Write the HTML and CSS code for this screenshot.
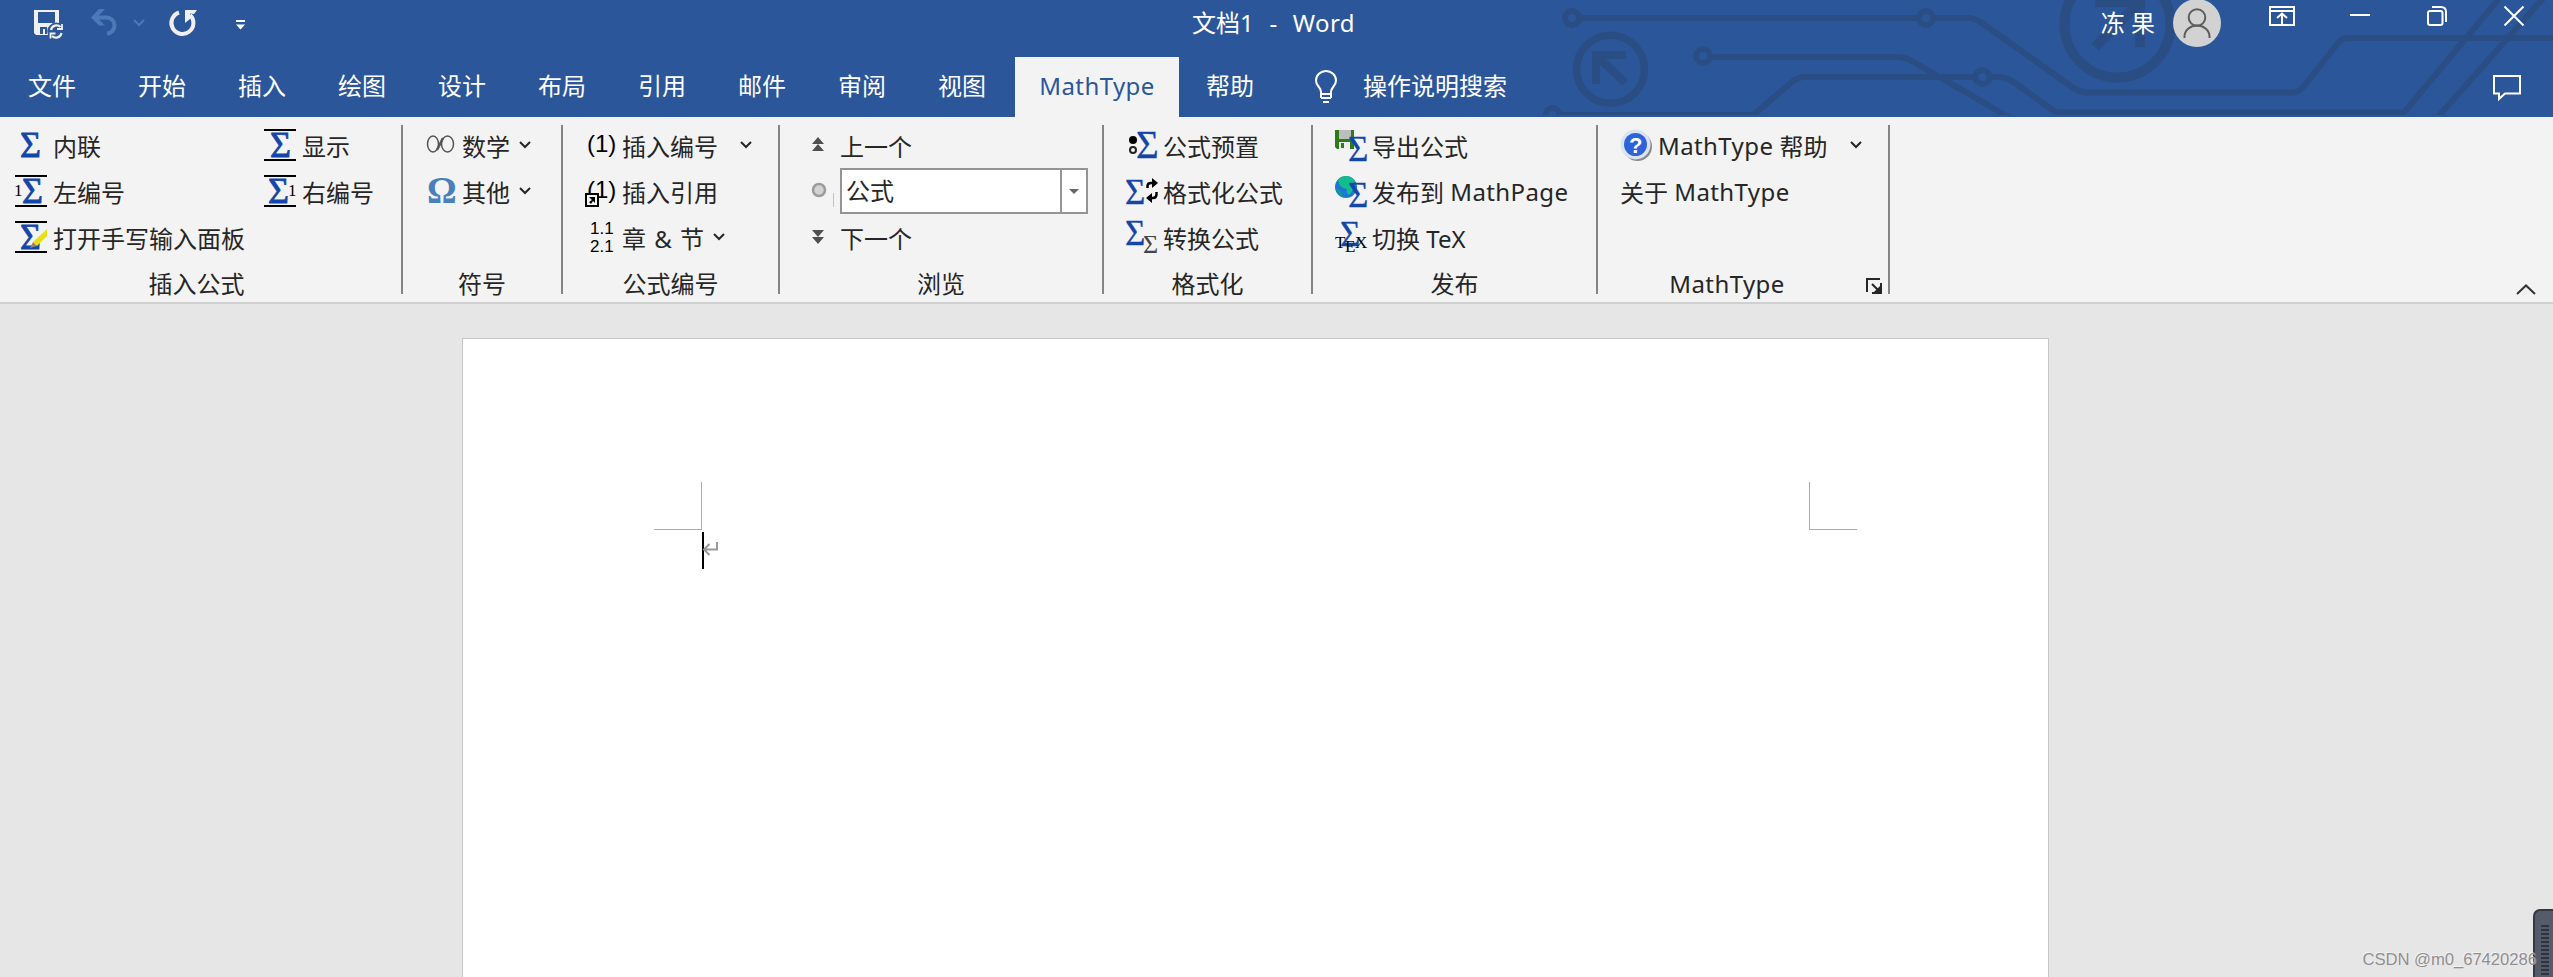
FILE: index.html
```html
<!DOCTYPE html>
<html lang="zh-CN">
<head>
	<meta charset="utf-8">
	<title>文档1 - Word</title>
	<link rel="stylesheet" href="styles.css">
</head>
<body>
	<header class="top">
		<!-- circuit pattern behind the title bar -->
		<svg class="circuit" width="1073" height="115" viewBox="0 0 1073 115">
			<g fill="none" stroke="#2a4e83" stroke-width="6">
				<circle cx="92" cy="18" r="7"/>
				<path d="M101 18H437"/>
				<circle cx="446" cy="18" r="7"/>
				<path d="M455 18H489Q495 18 502 23L592 87Q600 92.5 608 92.5H812Q819 92.5 824 86L858 43Q862 38 868 38H1073"/>
				<circle cx="223" cy="56" r="7"/>
				<path d="M232 57H417Q424 57 432 61L530 118"/>
				<circle cx="72.500" cy="115" r="7"/>
				<path d="M81 115H268Q274 115 278 111L312 82Q318 77 325 77H494"/>
				<circle cx="502.500" cy="77" r="7"/>
				<path d="M511 77H519Q527 77 535 83L576 112.500H924L1021 -4"/>
				<path d="M956 119L1066 -5"/>
				<circle cx="130.500" cy="69.300" r="34" stroke-width="7.500"/>
				<path d="M116 84V55H146M118 57L145 83" stroke-width="8"/>
				<circle cx="637.500" cy="24.500" r="53" stroke-width="10"/>
				<path d="M660 47V2H615M660 2L615 47" stroke-width="10"/>
			</g>
		</svg>

		<div class="titlebar">
			<div class="quick">
				<svg class="save" width="30" height="29" viewBox="0 0 30 29">
					<path d="M0 0H25V13A9 9 0 0 0 14 25H2L0 23ZM4 2V13H21V2ZM6 17V24H9V19H11V24H13V17Z" fill="#f0f0f0" fill-rule="evenodd"/>
					<g fill="none" stroke="#f0f0f0" stroke-width="2.200">
						<path d="M17 20A5.600 5.600 0 0 1 26.500 17M27.500 23A5.600 5.600 0 0 1 18 26"/>
						<path d="M28 14V19H23M16.500 28.500V23.500H21.500" stroke-width="1.800"/>
					</g>
				</svg>
				<svg class="undo" width="27" height="27" viewBox="0 0 27 27">
					<path d="M3 8.500H15A8 8 0 0 1 16 24.500" fill="none" stroke="#4a7ab8" stroke-width="4"/>
					<path d="M8 0H14L6 8.500L14 16.500H8L0 8.500Z" fill="#4a7ab8"/>
				</svg>
				<svg class="undo_more" width="12" height="8" viewBox="0 0 12 8"><path d="M1 1L6 6L11 1" fill="none" stroke="#4a7ab8" stroke-width="2"/></svg>
				<svg class="redo" width="27" height="27" viewBox="0 0 27 27">
					<path d="M9 2.500A11 11 0 1 0 20 5" fill="none" stroke="#f0f0f0" stroke-width="4"/>
					<path d="M15 0H27L24 4L20 3.500V9L15 13Z" fill="#f0f0f0"/>
				</svg>
				<svg class="customize" width="10" height="10" viewBox="0 0 10 10"><path d="M0 0H9V2H0ZM0 4.500H9L4.500 9.500Z" fill="#fff"/></svg>
			</div>
			<div class="doc_title">文档1&nbsp; -&nbsp; <span class="latin">Word</span></div>
			<div class="account">
				<span class="user">冻 果</span>
				<svg class="avatar" width="48" height="48" viewBox="0 0 48 48">
					<circle cx="24" cy="24" r="24" fill="#d2d2d2"/>
					<g fill="none" stroke="#5d5d5d" stroke-width="2"><circle cx="24" cy="18.500" r="8.300"/><path d="M11.500 39V37.500A12.500 11 0 0 1 36.500 37.500V39"/></g>
				</svg>
				<svg class="ribbon_opts" width="26" height="20" viewBox="0 0 26 20"><path d="M1 1H25V19H1ZM1 5H25M13 18V8M8 12L13 7.500L18 12" fill="none" stroke="#fff" stroke-width="2"/></svg>
				<svg class="win" width="20" height="20" viewBox="0 0 20 20"><path d="M0 9H20" stroke="#fff" stroke-width="2"/></svg>
				<svg class="win" width="20" height="20" viewBox="0 0 20 20"><g fill="none" stroke="#fff" stroke-width="2"><rect x="1" y="5" width="14.500" height="14" rx="2"/><path d="M5 1H14Q19 1 19 6V16"/></g></svg>
				<svg class="win" width="20" height="20" viewBox="0 0 20 20"><path d="M.5 .5L19.500 19.500M19.500 .5L.5 19.500" stroke="#fff" stroke-width="2"/></svg>
			</div>
		</div>

		<nav class="tabs">
			<a class="tab file">文件</a>
			<a class="tab">开始</a>
			<a class="tab">插入</a>
			<a class="tab">绘图</a>
			<a class="tab">设计</a>
			<a class="tab">布局</a>
			<a class="tab">引用</a>
			<a class="tab">邮件</a>
			<a class="tab">审阅</a>
			<a class="tab">视图</a>
			<a class="tab active latin">MathType</a>
			<a class="tab help">帮助</a>
			<svg class="bulb" width="24" height="33" viewBox="0 0 24 33"><path d="M7 24V22Q7 19.500 4.500 16.500Q2 13.500 2 10.500A10 9.500 0 0 1 22 10.500Q22 13.500 19.500 16.500Q17 19.500 17 22V24" fill="none" stroke="#fff" stroke-width="2"/><path d="M7 24H17M7 28H17M9 32H15M7 22V28M17 22V28" stroke="#fff" stroke-width="2"/></svg>
			<a class="tell_me">操作说明搜索</a>
			<svg class="comment" width="28" height="26" viewBox="0 0 28 26"><path d="M1 1H27V18.500H12L6 24V18.500H1Z" fill="none" stroke="#fff" stroke-width="2"/></svg>
		</nav>
	</header>

	<div class="ribbon">
		<section class="group insert">
			<div class="cols">
				<div class="item"><svg class="icon" viewBox="0 0 32 32"><text class="sigma" x="5" y="28">Σ</text></svg>内联</div>
				<div class="item"><svg class="icon" viewBox="0 0 32 32"><path class="bars" d="M0 1H32M0 31H32"/><text class="sigma" x="6" y="28">Σ</text></svg>显示</div>
				<div class="item"><svg class="icon" viewBox="0 0 32 32"><path class="bars" d="M0 1H32M0 31H32"/><text class="sigma" x="7" y="28">Σ</text><text class="num" x="-1" y="21">1</text></svg>左编号</div>
				<div class="item"><svg class="icon" viewBox="0 0 32 32"><path class="bars" d="M0 1H32M0 31H32"/><text class="sigma" x="4" y="28">Σ</text><text class="num" x="24" y="21">1</text></svg>右编号</div>
				<div class="item wide"><svg class="icon" viewBox="0 0 32 32"><path class="bars" d="M0 1H32M0 31H32"/><text class="sigma" x="5" y="28">Σ</text><path d="M18 21L32 8V15L22 25Z" fill="#e8e010"/><path d="M18 21L22 25L15 27Z" fill="#a08070"/></svg>打开手写输入面板</div>
			</div>
			<div class="label">插入公式</div>
		</section>

		<section class="group symbols">
			<div class="item"><svg class="icon" viewBox="0 0 32 32"><g fill="none" stroke="#555" stroke-width="1.500"><ellipse cx="9" cy="15" rx="5.500" ry="8"/><ellipse cx="23.500" cy="15" rx="6" ry="8"/><path d="M13 21L19 9" stroke-width="2.500"/></g></svg>数学<svg class="chev" viewBox="0 0 12 8"><path d="M1 1L6 6L11 1"/></svg></div>
			<div class="item"><svg class="icon" viewBox="0 0 32 32"><text class="omega" x="3" y="28">Ω</text></svg>其他<svg class="chev" viewBox="0 0 12 8"><path d="M1 1L6 6L11 1"/></svg></div>
			<div class="label">符号</div>
		</section>

		<section class="group numbers">
			<div class="item"><svg class="icon" viewBox="0 0 32 32"><text class="paren" x="2" y="23">(1)</text></svg>插入编号<svg class="chev far" viewBox="0 0 12 8"><path d="M1 1L6 6L11 1"/></svg></div>
			<div class="item"><svg class="icon" viewBox="0 0 32 32"><text class="paren" x="2" y="23">(1)</text><rect x="1" y="19" width="12" height="12" fill="#f3f3f3" stroke="#000" stroke-width="2"/><path d="M4 22H10V28L8 26L6 29L4 27L7 25Z"/></svg>插入引用</div>
			<div class="item"><svg class="icon" viewBox="0 0 32 32"><text class="chapter" x="5" y="13">1.1</text><text class="chapter" x="5" y="31">2.1</text></svg><span class="amp">章 &amp; 节</span><svg class="chev" viewBox="0 0 12 8"><path d="M1 1L6 6L11 1"/></svg></div>
			<div class="label">公式编号</div>
		</section>

		<section class="group browse">
			<div class="item"><svg class="icon" viewBox="0 0 32 32"><path d="M14 8L20 15H8ZM14 15L20 22H8Z" fill="#505050"/></svg>上一个</div>
			<div class="item"><svg class="icon" viewBox="0 0 32 32"><circle cx="15" cy="15" r="6" fill="#d0d5d3" stroke="#9c9c9c" stroke-width="2.500"/><path d="M29.500 18V32" stroke="#c4c4c4"/></svg>
				<div class="combo"><span>公式</span><i><svg width="10" height="5" viewBox="0 0 10 5"><path d="M0 0H10L5 5Z" fill="#666"/></svg></i></div>
			</div>
			<div class="item"><svg class="icon" viewBox="0 0 32 32"><path d="M8 9H20L14 16ZM8 16H20L14 23Z" fill="#505050"/></svg>下一个</div>
			<div class="label">浏览</div>
		</section>

		<section class="group format">
			<div class="item"><svg class="icon" viewBox="0 0 32 32"><circle cx="7" cy="11" r="4"/><circle cx="7" cy="21" r="3" fill="none" stroke="#222" stroke-width="2"/><text class="sigma big" x="10" y="29">Σ</text></svg>公式预置</div>
			<div class="item"><svg class="icon" viewBox="0 0 32 32"><text class="sigma small" x="-1" y="29">Σ</text><path d="M21.500 13V11Q21.500 8 25 8H27" fill="none" stroke="#000" stroke-width="2.500"/><path d="M26 3L32 8L26 13Z"/><path d="M30.500 17V19Q30.500 23 27 23H25" fill="none" stroke="#000" stroke-width="2.500"/><path d="M26 18L20 23L26 28Z"/></svg>格式化公式</div>
			<div class="item"><svg class="icon" viewBox="0 0 32 32"><text class="sigma small" x="-1" y="24">Σ</text><text class="sigma gray" x="17" y="32">Σ</text></svg>转换公式</div>
			<div class="label">格式化</div>
		</section>

		<section class="group publish">
			<div class="item"><svg class="icon" viewBox="0 0 32 32"><path d="M0 1H19V20H2L0 18Z" fill="#2a7d14"/><path d="M4 1H16V10H4Z" fill="#bdbdbd"/><path d="M4 13H15V20H4Z" fill="#eee"/><path d="M6 14H9V19H6Z" fill="#2a7d14"/><text class="sigma small" x="13" y="32">Σ</text></svg>导出公式</div>
			<div class="item"><svg class="icon" viewBox="0 0 32 32"><circle cx="11" cy="12" r="11" fill="#1c78d2"/><path d="M3 5Q11 -3 19 5Q22 9 17 11Q19 16 14 20Q11 18 12 14Q4 13 3 5Z" fill="#14bd8c"/><path d="M1 14Q6 13 8 22Q2 20 1 14Z" fill="#139c85"/><text class="sigma small" x="13" y="32">Σ</text></svg>发布到 <span class="latin">MathPage</span></div>
			<div class="item"><svg class="icon" viewBox="0 0 32 32"><text class="sigma small" x="5" y="25">Σ</text><g class="tex"><text x="0" y="27">T</text><text x="10" y="31">E</text><text x="20" y="27">X</text></g></svg>切换 TeX</div>
			<div class="label">发布</div>
		</section>

		<section class="group mathtype">
			<div class="item"><svg class="icon" viewBox="0 0 32 32"><circle cx="17.500" cy="17.500" r="14.500" fill="#8a8a8a"/><circle cx="15.500" cy="15.500" r="15" fill="#d9e3f4"/><circle cx="15.500" cy="15.500" r="11.500" fill="#2e62d9"/><text class="question" x="9" y="23.500">?</text></svg><span class="latin">MathType</span> 帮助<svg class="chev far" viewBox="0 0 12 8"><path d="M1 1L6 6L11 1"/></svg></div>
			<div class="item">关于 <span class="latin">MathType</span></div>
			<div class="label"><span class="latin">MathType</span><svg class="launcher" width="16" height="16" viewBox="0 0 16 16"><path d="M1 14V1H14M6 6L14 14M15 5V15H6" fill="none" stroke="#262626" stroke-width="2"/><path d="M14 8V14H8Z" fill="#262626"/></svg></div>
		</section>

		<svg class="collapse" width="20" height="11" viewBox="0 0 20 11"><path d="M1 10L10 1.500L19 10" fill="none" stroke="#333" stroke-width="2"/></svg>
	</div>

	<main class="canvas">
		<div class="page">
			<i class="corner left"></i>
			<i class="corner right"></i>
			<i class="caret"></i>
			<svg class="return" width="16" height="16" viewBox="0 0 16 16"><path d="M14 1V8.500H1M6.500 3L1 8.500L6.500 14" fill="none" stroke="#999" stroke-width="2"/></svg>
		</div>
		<div class="side_handle"></div>
		<div class="watermark">CSDN @m0_67420286</div>
	</main>
</body>
</html>
```

FILE: styles.css
```css
body{
	margin:0;
	height:977px;
	display:flex;
	flex-direction:column;
	overflow:hidden;
	font-family:"Noto Sans","Noto Sans CJK SC",sans-serif;
	font-size:24px;
	color:#262626;
	background:#e6e6e6;
}
svg{
	display:block;
	flex:none;
	overflow:visible;
}
.latin{
	letter-spacing:.4px;
}
.top{
	position:relative;
	height:117px;
	flex:none;
	background:#2b579a;
	color:#fff;
}
.circuit{
	position:absolute;
	right:0;
	top:0;
	overflow:hidden;
}
.titlebar{
	position:relative;
	display:flex;
	align-items:flex-start;
	height:57px;
	line-height:45px;
	white-space:nowrap;
}
.quick{
	display:flex;
	width:1158px;
	padding-left:34px;
}
.save{
	margin-top:10px;
}
.undo{
	margin:9px 0 0 27px;
}
.undo_more{
	margin:19px 0 0 15px;
}
.redo{
	margin:10px 0 0 25px;
}
.customize{
	margin:20px 0 0 39px;
}
.doc_title{
	word-spacing:1.6px;
}
.account{
	display:flex;
	margin-left:auto;
	padding-right:29px;
}
.avatar{
	margin:-1px 48px 0 18px;
}
.ribbon_opts{
	margin-top:6px;
	margin-right:-2px;
}
.win{
	margin:6px 0 0 57px;
}

/* tabs */
.tabs{
	position:relative;
	display:flex;
	height:60px;
	line-height:57px;
	white-space:nowrap;
}
.tab{
	padding:0 26px;
}
.file{
	padding:0 36px 0 28px;
}
.active{
	width:164px;
	margin-left:3px;
	padding:0;
	text-align:center;
	background:#f3f3f3;
	color:#2b579a;
}
.help{
	padding:0 60px 0 27px;
}
.bulb{
	margin-top:13px;
}
.tell_me{
	margin-left:25px;
}
.comment{
	margin:18px 32px 0 auto;
}

/* ribbon */
.ribbon{
	display:flex;
	flex:none;
	height:177px;
	padding-top:8px;
	background:#f3f3f3;
	border-bottom:2px solid #d0d0d0;
	white-space:nowrap;
}
.group{
	position:relative;
	display:flex;
	flex-direction:column;
	box-sizing:border-box;
	height:169px;
	border-right:2px solid #848484;
}
.cols{
	display:grid;
	grid-template-columns:249px auto;
}
.wide{
	grid-column:span 2;
}
.item{
	display:flex;
	align-items:center;
	height:46px;
	white-space:pre;
}
.group > .item:first-child,.cols{
	margin-top:-3px;
}
.label{
	margin-top:auto;
	height:22px;
	line-height:24px;
	text-align:center;
}
.insert{
	width:403px;
	padding-left:15px;
}
.insert .label{
	margin-right:23px;
}
.symbols{
	width:160px;
	padding-left:21px;
}
.symbols .label{
	margin-left:-21px;
}
.numbers{
	width:217px;
	padding-left:22px;
}
.numbers .label{
	margin-left:-22px;
}
.browse{
	width:324px;
	padding-left:24px;
}
.browse .label{
	margin-left:-24px;
}
.browse .icon{
	margin-right:4px;
}
.format{
	width:209px;
	padding-left:22px;
}
.format .label{
	margin-left:-22px;
}
.publish{
	width:285px;
	padding-left:22px;
}
.publish .label{
	margin-left:-22px;
}
.mathtype{
	width:292px;
	padding-left:22px;
}
.mathtype .label{
	margin:auto 32px 0 -22px;
}
.icon{
	width:32px;
	height:32px;
	margin-right:6px;
}
.numbers .icon,.format .icon,.publish .icon{
	margin-right:5px;
}
.chev{
	width:12px;
	height:8px;
	margin-left:9px;
	fill:none;
	stroke:#262626;
	stroke-width:2;
}
.far{
	margin-left:22px;
}
.amp{
	word-spacing:2px;
}
.bars{
	stroke:#000;
	stroke-width:2;
}
.sigma{
	font:36px "Liberation Serif",serif;
	fill:#1446a8;
	stroke:#1446a8;
	stroke-width:.8;
}
.big{
	font-size:39px;
	stroke-width:.3;
}
.small{
	font-size:35px;
	stroke-width:.3;
}
.gray{
	font-size:26px;
	fill:#444;
	stroke:none;
}
.omega{
	font:bold 37px "Liberation Serif",serif;
	fill:#4a7fbb;
}
.num{
	font:17px "Liberation Serif",serif;
	fill:#000;
}
.paren{
	font:24px "Liberation Sans",sans-serif;
	fill:#000;
}
.chapter{
	font:17px "Liberation Sans",sans-serif;
	fill:#000;
}
.tex{
	font:17px "Liberation Serif",serif;
	fill:#000;
}
.question{
	font:bold 22px "Liberation Sans",sans-serif;
	fill:#fff;
}
.combo{
	display:flex;
	box-sizing:border-box;
	width:248px;
	height:46px;
	line-height:42px;
	border:2px solid #949494;
	background:#fff;
}
.browse .item{
	white-space:normal;
}
.combo span{
	flex:1;
	padding-left:4px;
}
.combo i{
	display:flex;
	align-items:center;
	justify-content:center;
	width:24px;
	border-left:2px solid #949494;
}
.launcher{
	position:absolute;
	right:6px;
	bottom:0;
}
.collapse{
	margin:159px 17px 0 auto;
}

/* document */
.canvas{
	position:relative;
	flex:1;
	overflow:hidden;
}
.page{
	position:relative;
	box-sizing:border-box;
	width:1587px;
	height:700px;
	margin:34px 0 0 462px;
	background:#fff;
	border:1px solid #c6c6c6;
}
.corner{
	position:absolute;
	top:143px;
	width:47px;
	height:47px;
	border:0 solid #ababab;
	border-bottom-width:1px;
}
.left{
	left:191px;
	border-right-width:1px;
}
.right{
	left:1346px;
	border-left-width:1px;
}
.caret{
	position:absolute;
	left:239px;
	top:193px;
	width:2px;
	height:37px;
	background:#000;
}
.return{
	position:absolute;
	left:240px;
	top:202px;
}
.side_handle{
	position:absolute;
	right:0;
	top:605px;
	width:18px;
	height:80px;
	border:solid #343741;
	border-width:2px 0 0 2px;
	border-radius:7px 0 0 0;
	background:repeating-linear-gradient(#30333b 0 2px,#565b6b 2px 4px) 6px 14px/8px 80px no-repeat #565b6b;
}
.watermark{
	position:absolute;
	right:16px;
	bottom:7px;
	font:16.6px "Liberation Sans",sans-serif;
	color:#8f8f8f;
	text-shadow:-1px -1px 0 #fff8;
}
```
